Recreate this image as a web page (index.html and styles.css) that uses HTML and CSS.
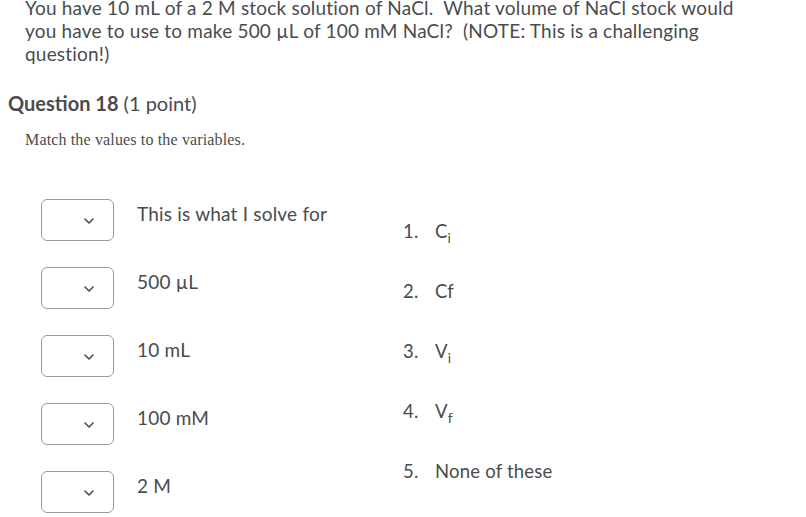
FILE: index.html
```html
<!DOCTYPE html>
<html lang="en">
<head>
<meta charset="utf-8">
<title>Question 18</title>
<link rel="stylesheet" href="styles.css">
</head>
<body>
<div class="page">
  <p class="prompt">You have 10 mL of a 2 M stock solution of NaCl.&nbsp; What volume of NaCl stock would you have to use to make 500 µL of 100 mM NaCl?&nbsp; (NOTE: This is a challenging question!)</p>

  <h2 class="q-title"><strong>Question 18</strong> (1 point)</h2>

  <p class="instructions">Match the values to the variables.</p>

  <div class="match">
    <div class="choices">
      <div class="choice">
        <button class="select" type="button" aria-label="Select answer"><svg class="chev" viewBox="0 0 10 6" width="10" height="6"><path d="M1 1l4 4 4-4" /></svg></button>
        <span class="label">This is what I solve for</span>
      </div>
      <div class="choice">
        <button class="select" type="button" aria-label="Select answer"><svg class="chev" viewBox="0 0 10 6" width="10" height="6"><path d="M1 1l4 4 4-4" /></svg></button>
        <span class="label">500 µL</span>
      </div>
      <div class="choice">
        <button class="select" type="button" aria-label="Select answer"><svg class="chev" viewBox="0 0 10 6" width="10" height="6"><path d="M1 1l4 4 4-4" /></svg></button>
        <span class="label">10 mL</span>
      </div>
      <div class="choice">
        <button class="select" type="button" aria-label="Select answer"><svg class="chev" viewBox="0 0 10 6" width="10" height="6"><path d="M1 1l4 4 4-4" /></svg></button>
        <span class="label">100 mM</span>
      </div>
      <div class="choice">
        <button class="select" type="button" aria-label="Select answer"><svg class="chev" viewBox="0 0 10 6" width="10" height="6"><path d="M1 1l4 4 4-4" /></svg></button>
        <span class="label">2 M</span>
      </div>
    </div>

    <ol class="answers">
      <li><span class="num">1.</span><span class="ans">C<sub>i</sub></span></li>
      <li><span class="num">2.</span><span class="ans">Cf</span></li>
      <li><span class="num">3.</span><span class="ans">V<sub>i</sub></span></li>
      <li><span class="num">4.</span><span class="ans">V<sub>f</sub></span></li>
      <li><span class="num">5.</span><span class="ans">None of these</span></li>
    </ol>
  </div>
</div>
</body>
</html>
```

FILE: styles.css
```css
html, body {
  margin: 0;
  padding: 0;
  background: #ffffff;
}

body {
  font-family: Lato, "Open Sans", sans-serif;
  color: #494c4e;
  letter-spacing: 0.2px;
  overflow: hidden;
}

.page {
  width: 806px;
  height: 517px;
}

.prompt {
  margin: -4px 0 0 25px;
  width: 730px;
  font-size: 19px;
  line-height: 23px;
}

.q-title {
  margin: 26px 0 0 8px;
  font-size: 20px;
  line-height: 24px;
  font-weight: 400;
  letter-spacing: 0;
}

.q-title strong {
  font-weight: 700;
}

.instructions {
  margin: 16px 0 0 25px;
  font-family: "Liberation Serif", "Times New Roman", serif;
  font-size: 16px;
  line-height: 18px;
  letter-spacing: 0.15px;
}

.match {
  display: flex;
  margin-top: 50px;
}

.choices {
  display: flex;
  flex-direction: column;
  gap: 26px;
  margin-left: 41px;
  width: 362px;
}

.choice {
  display: flex;
  align-items: flex-start;
  gap: 23px;
}

.select {
  flex: none;
  width: 73px;
  height: 42px;
  margin: 0;
  padding: 0 19px 0 0;
  border: 1px solid #9a9c9e;
  border-radius: 6px;
  background: #ffffff;
  display: flex;
  align-items: center;
  justify-content: flex-end;
  box-sizing: border-box;
}

.chev {
  display: block;
  margin-top: 2px;
}

.chev path {
  fill: none;
  stroke: #494c4e;
  stroke-width: 1.6;
  stroke-linecap: round;
  stroke-linejoin: round;
}

.label {
  margin-top: 4px;
  font-size: 19px;
  line-height: 22px;
}

.answers {
  list-style: none;
  margin: 21px 0 0 0;
  padding: 0;
  display: flex;
  flex-direction: column;
  gap: 38px;
}

.answers li {
  display: flex;
  font-size: 18.5px;
  line-height: 22px;
}

.num {
  width: 32px;
  flex: none;
}

.answers sub {
  font-size: 14px;
  line-height: 0;
  vertical-align: -5px;
}
```
